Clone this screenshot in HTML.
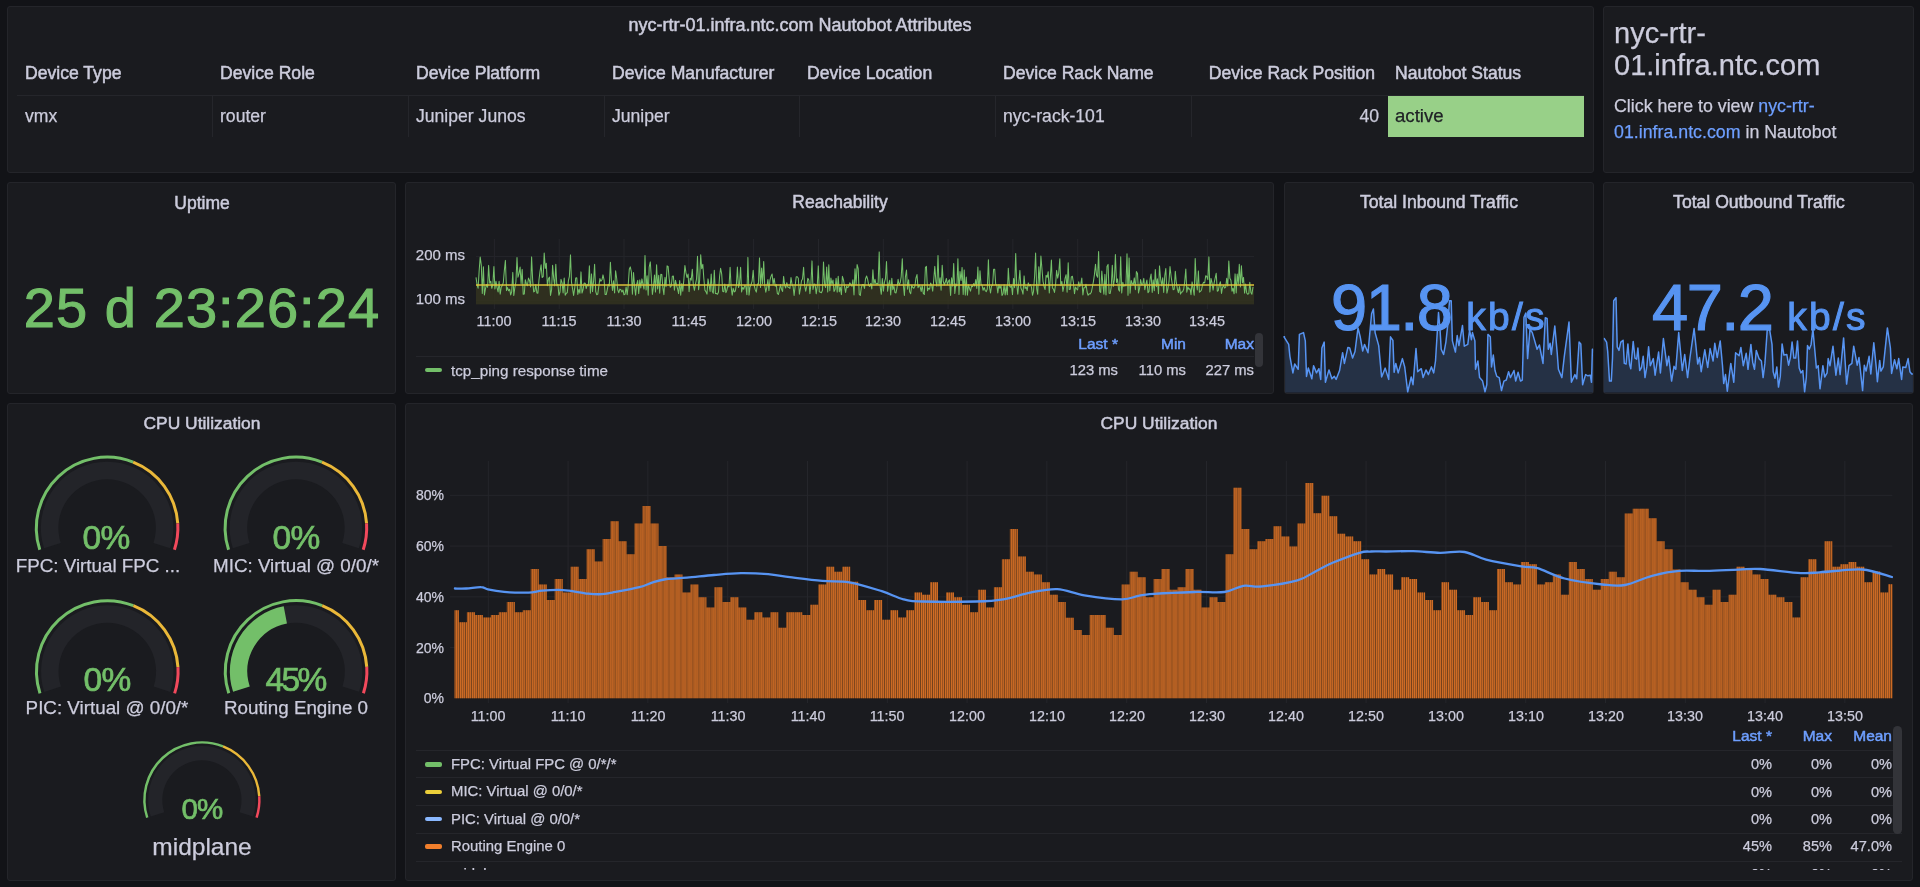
<!DOCTYPE html><html><head><meta charset="utf-8"><style>
*{margin:0;padding:0;box-sizing:border-box}
html,body{width:1920px;height:887px;overflow:hidden;background:#121317;font-family:"Liberation Sans", sans-serif}
.p{position:absolute;background:#1a1b1f;border:1px solid #24252a;border-radius:3px}
.tm,.tr,.tb{position:absolute;white-space:nowrap;will-change:transform}
.tm{-webkit-text-stroke:0.5px currentColor}
.tr{-webkit-text-stroke:0.25px currentColor}
.tb{font-weight:bold}
.ln{position:absolute;background:#25262b}
svg{position:absolute;left:0;top:0}
</style></head><body>
<div class="p" style="left:6.9px;top:5.9px;width:1587.1px;height:167.0px"></div>
<div class="p" style="left:1603.0px;top:5.9px;width:310.9px;height:167.0px"></div>
<div class="p" style="left:6.9px;top:182.2px;width:389.6px;height:211.4px"></div>
<div class="p" style="left:405.1px;top:182.2px;width:869.1px;height:211.4px"></div>
<div class="p" style="left:1284.1px;top:182.2px;width:309.9px;height:211.4px"></div>
<div class="p" style="left:1602.8px;top:182.2px;width:311.1px;height:211.4px"></div>
<div class="p" style="left:6.9px;top:403.4px;width:389.2px;height:477.6px"></div>
<div class="p" style="left:405.3px;top:403.4px;width:1507.4px;height:477.6px"></div>
<div class="tm" style="left:200.4px;width:1200px;text-align:center;top:16.36px;font-size:18px;line-height:18px;color:#ccccdc;">nyc-rtr-01.infra.ntc.com Nautobot Attributes</div>
<div class="tm" style="left:24.7px;top:64.60px;font-size:17.6px;line-height:17.6px;color:#ccccdc;">Device Type</div>
<div class="tm" style="left:220.4px;top:64.60px;font-size:17.6px;line-height:17.6px;color:#ccccdc;">Device Role</div>
<div class="tm" style="left:416.1px;top:64.60px;font-size:17.6px;line-height:17.6px;color:#ccccdc;">Device Platform</div>
<div class="tm" style="left:611.9px;top:64.60px;font-size:17.6px;line-height:17.6px;color:#ccccdc;">Device Manufacturer</div>
<div class="tm" style="left:807.2px;top:64.60px;font-size:17.6px;line-height:17.6px;color:#ccccdc;">Device Location</div>
<div class="tm" style="left:1003.1px;top:64.60px;font-size:17.6px;line-height:17.6px;color:#ccccdc;">Device Rack Name</div>
<div class="tm" style="left:175.0px;width:1200px;text-align:right;top:64.60px;font-size:17.6px;line-height:17.6px;color:#ccccdc;">Device Rack Position</div>
<div class="tm" style="left:1394.7px;top:64.60px;font-size:17.6px;line-height:17.6px;color:#ccccdc;">Nautobot Status</div>
<div class="ln" style="left:17px;top:95px;width:1567px;height:1px"></div>
<div class="ln" style="left:212.0px;top:96px;width:1px;height:41px"></div>
<div class="ln" style="left:407.8px;top:96px;width:1px;height:41px"></div>
<div class="ln" style="left:603.5px;top:96px;width:1px;height:41px"></div>
<div class="ln" style="left:799.1px;top:96px;width:1px;height:41px"></div>
<div class="ln" style="left:994.9px;top:96px;width:1px;height:41px"></div>
<div class="ln" style="left:1190.8px;top:96px;width:1px;height:41px"></div>
<div style="position:absolute;left:1388px;top:95.8px;width:195.8px;height:40.9px;background:#98d088"></div>
<div class="tr" style="left:24.7px;top:108.40px;font-size:17.6px;line-height:17.6px;color:#ccccdc;">vmx</div>
<div class="tr" style="left:220.4px;top:108.40px;font-size:17.6px;line-height:17.6px;color:#ccccdc;">router</div>
<div class="tr" style="left:416.1px;top:108.40px;font-size:17.6px;line-height:17.6px;color:#ccccdc;">Juniper Junos</div>
<div class="tr" style="left:611.9px;top:108.40px;font-size:17.6px;line-height:17.6px;color:#ccccdc;">Juniper</div>
<div class="tr" style="left:1003.1px;top:108.40px;font-size:17.6px;line-height:17.6px;color:#ccccdc;">nyc-rack-101</div>
<div class="tr" style="left:179.0px;width:1200px;text-align:right;top:108.40px;font-size:17.6px;line-height:17.6px;color:#ccccdc;">40</div>
<div class="tr" style="left:1395.2px;top:107.26px;font-size:18.6px;line-height:18.6px;color:#202226;">active</div>
<div class="tr" style="left:1614.0px;top:18.55px;font-size:29px;line-height:29px;color:#ccccdc;">nyc-rtr-</div>
<div class="tr" style="left:1614.0px;top:50.95px;font-size:29px;line-height:29px;color:#ccccdc;">01.infra.ntc.com</div>
<div class="tr" style="left:1614.0px;top:98.03px;font-size:17.8px;line-height:17.8px;color:#ccccdc;">Click here to view <span style="color:#6e9fff">nyc-rtr-</span></div>
<div class="tr" style="left:1614.0px;top:124.03px;font-size:17.8px;line-height:17.8px;color:#ccccdc;"><span style="color:#6e9fff">01.infra.ntc.com</span> in Nautobot</div>
<div class="tm" style="left:-398.3px;width:1200px;text-align:center;top:194.59px;font-size:17.5px;line-height:17.5px;color:#ccccdc;">Uptime</div>
<div class="tr" style="left:-398.3px;width:1200px;text-align:center;top:279.50px;font-size:56px;line-height:56px;color:#73bf69;-webkit-text-stroke:1.1px #73bf69;letter-spacing:1.06px;margin-left:0.5px">25 d 23:26:24</div>
<div class="tm" style="left:239.7px;width:1200px;text-align:center;top:194.19px;font-size:17.5px;line-height:17.5px;color:#ccccdc;">Reachability</div>
<svg width="1920" height="887"><line x1="476" y1="256.6" x2="1254" y2="256.6" stroke="#25262b" stroke-width="1"/><line x1="476" y1="300.6" x2="1254" y2="300.6" stroke="#25262b" stroke-width="1"/><line x1="494.4" y1="239" x2="494.4" y2="309" stroke="#25262b" stroke-width="1"/><line x1="559.2" y1="239" x2="559.2" y2="309" stroke="#25262b" stroke-width="1"/><line x1="624.0" y1="239" x2="624.0" y2="309" stroke="#25262b" stroke-width="1"/><line x1="688.8" y1="239" x2="688.8" y2="309" stroke="#25262b" stroke-width="1"/><line x1="753.6" y1="239" x2="753.6" y2="309" stroke="#25262b" stroke-width="1"/><line x1="818.5" y1="239" x2="818.5" y2="309" stroke="#25262b" stroke-width="1"/><line x1="883.3" y1="239" x2="883.3" y2="309" stroke="#25262b" stroke-width="1"/><line x1="948.1" y1="239" x2="948.1" y2="309" stroke="#25262b" stroke-width="1"/><line x1="1012.9" y1="239" x2="1012.9" y2="309" stroke="#25262b" stroke-width="1"/><line x1="1077.7" y1="239" x2="1077.7" y2="309" stroke="#25262b" stroke-width="1"/><line x1="1142.5" y1="239" x2="1142.5" y2="309" stroke="#25262b" stroke-width="1"/><line x1="1207.3" y1="239" x2="1207.3" y2="309" stroke="#25262b" stroke-width="1"/><rect x="476" y="285" width="778" height="19.4" fill="#35351f" fill-opacity="0.8"/><path d="M476.0,277.4 L477.1,284.8 L478.1,288.2 L479.2,270.1 L480.2,257.1 L481.3,265.1 L482.3,293.5 L483.4,266.7 L484.4,294.9 L485.5,288.6 L486.5,284.5 L487.6,287.3 L488.6,265.4 L489.7,283.3 L490.7,281.2 L491.8,288.3 L492.8,284.7 L493.9,266.5 L494.9,288.9 L496.0,281.3 L497.0,287.4 L498.1,292.0 L499.1,281.2 L500.2,294.1 L501.2,287.3 L502.3,285.4 L503.3,282.8 L504.4,269.9 L505.4,260.4 L506.5,290.6 L507.5,287.6 L508.6,290.8 L509.6,289.2 L510.7,294.9 L511.7,291.6 L512.8,272.4 L513.8,295.4 L514.9,287.3 L515.9,282.0 L517.0,257.5 L518.0,277.1 L519.1,273.2 L520.1,267.0 L521.1,283.8 L522.2,269.4 L523.2,294.2 L524.3,293.9 L525.3,279.7 L526.4,284.0 L527.4,285.7 L528.5,278.1 L529.5,280.4 L530.6,287.0 L531.6,256.9 L532.7,281.1 L533.7,291.9 L534.8,291.1 L535.8,284.6 L536.9,293.0 L537.9,293.2 L539.0,279.6 L540.0,271.6 L541.1,264.8 L542.1,277.5 L543.2,276.5 L544.2,253.1 L545.3,268.4 L546.3,263.2 L547.4,285.7 L548.4,279.1 L549.5,277.1 L550.5,295.4 L551.6,289.6 L552.6,265.2 L553.7,278.4 L554.7,285.9 L555.8,264.3 L556.8,285.7 L557.9,284.3 L558.9,295.3 L560.0,292.0 L561.0,279.3 L562.1,282.9 L563.1,293.0 L564.2,278.0 L565.2,295.3 L566.3,293.3 L567.3,292.5 L568.4,280.7 L569.4,276.3 L570.5,254.9 L571.5,282.2 L572.6,289.1 L573.6,295.4 L574.7,288.2 L575.7,278.0 L576.8,277.8 L577.8,294.4 L578.9,289.5 L579.9,293.2 L581.0,271.9 L582.0,293.0 L583.1,289.5 L584.1,283.1 L585.2,283.2 L586.2,288.6 L587.3,284.5 L588.3,286.0 L589.4,265.8 L590.4,293.3 L591.5,273.9 L592.5,291.6 L593.6,280.9 L594.6,264.2 L595.7,291.5 L596.7,294.7 L597.8,294.0 L598.8,286.4 L599.9,278.6 L600.9,281.3 L602.0,279.8 L603.0,274.9 L604.1,280.1 L605.1,294.4 L606.2,294.6 L607.2,290.1 L608.3,284.2 L609.3,286.1 L610.4,262.2 L611.4,280.3 L612.5,290.4 L613.5,280.7 L614.6,293.0 L615.6,270.7 L616.7,278.5 L617.7,289.8 L618.8,292.7 L619.8,289.1 L620.9,289.8 L621.9,292.0 L623.0,290.1 L624.0,294.8 L625.1,294.1 L626.1,287.0 L627.2,294.8 L628.2,285.6 L629.3,269.3 L630.3,266.9 L631.4,272.0 L632.4,294.3 L633.5,272.6 L634.5,285.6 L635.6,295.1 L636.6,284.6 L637.7,280.4 L638.7,293.6 L639.8,279.9 L640.8,287.9 L641.9,278.9 L642.9,284.2 L644.0,289.1 L645.0,255.6 L646.1,289.9 L647.1,275.8 L648.2,295.2 L649.2,267.2 L650.3,261.9 L651.3,277.2 L652.4,294.5 L653.4,287.0 L654.5,275.0 L655.5,292.1 L656.6,264.7 L657.6,288.9 L658.7,275.3 L659.7,293.2 L660.8,274.3 L661.8,274.4 L662.9,287.9 L663.9,294.7 L665.0,277.2 L666.0,286.7 L667.1,265.9 L668.1,266.4 L669.2,278.7 L670.2,287.3 L671.3,286.0 L672.3,276.2 L673.4,276.1 L674.4,290.3 L675.5,280.3 L676.5,285.2 L677.6,289.0 L678.6,293.6 L679.7,280.6 L680.7,295.3 L681.8,283.5 L682.8,291.3 L683.9,279.1 L684.9,265.6 L686.0,272.9 L687.0,277.5 L688.1,274.1 L689.1,291.7 L690.2,278.2 L691.2,280.1 L692.3,269.3 L693.3,284.7 L694.4,290.3 L695.4,284.7 L696.5,279.2 L697.5,256.3 L698.6,289.8 L699.6,280.5 L700.7,254.7 L701.7,268.8 L702.8,264.3 L703.8,278.1 L704.9,290.1 L705.9,291.6 L707.0,294.1 L708.0,278.9 L709.1,285.7 L710.1,291.4 L711.2,274.0 L712.2,291.2 L713.3,293.3 L714.3,270.3 L715.4,293.6 L716.4,293.5 L717.5,294.3 L718.5,292.0 L719.6,276.3 L720.6,268.3 L721.7,274.0 L722.7,291.2 L723.8,291.8 L724.8,284.0 L725.9,292.6 L726.9,290.2 L728.0,284.8 L729.0,286.9 L730.1,267.2 L731.1,286.4 L732.2,295.2 L733.2,288.4 L734.3,291.9 L735.3,291.1 L736.4,284.9 L737.4,267.0 L738.5,287.5 L739.5,284.1 L740.6,267.2 L741.6,292.0 L742.7,287.3 L743.7,289.3 L744.8,285.4 L745.8,286.3 L746.9,294.8 L747.9,257.4 L749.0,295.1 L750.0,287.1 L751.1,284.5 L752.1,281.2 L753.2,270.3 L754.2,285.5 L755.3,289.9 L756.3,292.1 L757.4,284.1 L758.4,284.3 L759.5,257.9 L760.5,287.5 L761.6,268.1 L762.6,283.6 L763.7,261.5 L764.7,285.4 L765.8,292.2 L766.8,287.3 L767.9,279.5 L768.9,290.8 L770.0,279.9 L771.0,276.4 L772.1,274.0 L773.1,284.4 L774.2,278.4 L775.2,286.2 L776.3,284.6 L777.3,293.3 L778.4,294.5 L779.4,290.3 L780.5,284.6 L781.5,289.2 L782.6,291.4 L783.6,276.4 L784.7,285.5 L785.7,288.0 L786.8,282.7 L787.8,287.0 L788.9,287.5 L789.9,288.5 L791.0,277.5 L792.0,284.2 L793.1,286.5 L794.1,295.5 L795.2,285.6 L796.2,276.8 L797.3,276.8 L798.3,278.3 L799.4,294.2 L800.4,288.7 L801.5,280.7 L802.5,279.0 L803.6,267.3 L804.6,285.4 L805.7,291.2 L806.7,286.5 L807.8,278.2 L808.8,280.0 L809.9,293.8 L810.9,284.3 L812.0,260.9 L813.0,289.4 L814.1,284.0 L815.1,284.3 L816.2,293.8 L817.2,286.9 L818.3,265.9 L819.3,291.8 L820.4,292.3 L821.4,292.8 L822.5,290.3 L823.5,262.0 L824.6,284.3 L825.6,287.5 L826.7,267.0 L827.7,292.0 L828.8,264.8 L829.8,290.7 L830.9,278.0 L831.9,284.1 L833.0,280.1 L834.0,291.4 L835.1,289.5 L836.1,278.2 L837.2,292.1 L838.2,276.2 L839.3,291.8 L840.3,287.0 L841.4,294.6 L842.4,276.3 L843.5,279.8 L844.5,286.3 L845.6,292.5 L846.6,286.4 L847.7,287.6 L848.7,286.7 L849.8,282.8 L850.8,284.6 L851.9,286.2 L852.9,279.8 L854.0,294.9 L855.0,268.7 L856.1,284.8 L857.1,264.6 L858.2,268.7 L859.2,294.2 L860.3,295.5 L861.3,287.8 L862.4,284.4 L863.4,284.4 L864.5,288.4 L865.5,279.0 L866.6,276.0 L867.6,279.2 L868.7,285.4 L869.7,286.4 L870.8,283.4 L871.8,289.0 L872.9,269.7 L873.9,284.3 L875.0,279.3 L876.0,284.3 L877.1,283.3 L878.1,284.5 L879.2,251.9 L880.2,287.0 L881.3,294.3 L882.3,278.5 L883.4,291.1 L884.4,282.4 L885.5,278.5 L886.5,261.6 L887.6,291.3 L888.6,284.3 L889.7,280.3 L890.7,295.0 L891.8,278.3 L892.8,289.7 L893.9,286.1 L894.9,292.5 L896.0,292.9 L897.0,287.8 L898.1,279.3 L899.1,284.9 L900.2,282.8 L901.2,276.6 L902.3,258.7 L903.3,284.8 L904.4,295.4 L905.4,276.8 L906.5,270.0 L907.5,289.1 L908.6,279.8 L909.6,291.8 L910.7,293.7 L911.7,285.4 L912.8,287.4 L913.8,288.3 L914.9,286.3 L915.9,278.2 L917.0,274.6 L918.0,287.8 L919.1,284.9 L920.1,286.7 L921.2,291.5 L922.2,285.2 L923.3,293.4 L924.3,294.5 L925.4,267.5 L926.4,266.3 L927.5,290.7 L928.5,288.3 L929.6,289.2 L930.6,283.0 L931.7,285.2 L932.7,291.1 L933.8,279.3 L934.8,266.4 L935.9,281.4 L936.9,286.3 L938.0,255.6 L939.0,286.1 L940.1,277.8 L941.1,290.3 L942.2,265.2 L943.2,281.0 L944.3,285.0 L945.3,282.3 L946.4,278.5 L947.4,284.6 L948.5,281.1 L949.5,279.7 L950.6,295.5 L951.6,277.8 L952.7,286.3 L953.7,263.6 L954.8,293.4 L955.8,283.9 L956.9,285.9 L957.9,258.7 L959.0,294.5 L960.0,271.5 L961.1,280.5 L962.1,267.4 L963.2,294.6 L964.2,269.9 L965.3,295.1 L966.3,277.1 L967.4,295.2 L968.4,284.6 L969.5,288.5 L970.5,291.1 L971.6,285.8 L972.6,286.6 L973.7,283.6 L974.7,286.1 L975.8,279.6 L976.8,288.4 L977.9,267.0 L978.9,294.3 L980.0,270.7 L981.0,284.4 L982.1,285.4 L983.1,290.3 L984.2,287.5 L985.2,290.7 L986.3,291.6 L987.3,289.0 L988.4,259.7 L989.4,286.7 L990.5,293.0 L991.5,286.1 L992.6,285.2 L993.6,269.2 L994.7,269.3 L995.7,284.5 L996.8,284.9 L997.8,292.9 L998.9,284.6 L999.9,288.3 L1001.0,285.6 L1002.0,295.5 L1003.1,293.4 L1004.1,284.8 L1005.2,295.0 L1006.2,285.9 L1007.3,294.7 L1008.3,268.2 L1009.4,285.8 L1010.4,287.2 L1011.5,285.7 L1012.5,294.6 L1013.6,278.4 L1014.6,287.7 L1015.7,253.5 L1016.7,284.4 L1017.8,294.3 L1018.8,283.1 L1019.9,270.4 L1020.9,288.1 L1022.0,290.4 L1023.0,294.1 L1024.1,275.9 L1025.1,288.5 L1026.2,287.0 L1027.2,290.6 L1028.3,282.9 L1029.3,286.0 L1030.4,284.6 L1031.4,286.9 L1032.5,295.3 L1033.5,291.6 L1034.6,276.0 L1035.6,253.1 L1036.7,289.0 L1037.7,294.3 L1038.8,266.7 L1039.8,284.3 L1040.9,256.0 L1041.9,268.3 L1043.0,281.3 L1044.0,286.3 L1045.1,289.5 L1046.1,275.2 L1047.2,277.3 L1048.2,271.7 L1049.3,293.0 L1050.3,278.4 L1051.4,260.0 L1052.4,288.0 L1053.5,289.1 L1054.5,292.4 L1055.6,284.1 L1056.6,270.4 L1057.7,278.1 L1058.7,273.3 L1059.8,258.7 L1060.8,285.6 L1061.9,281.5 L1062.9,291.4 L1064.0,286.0 L1065.0,278.7 L1066.1,274.7 L1067.1,292.2 L1068.2,262.8 L1069.2,289.4 L1070.3,289.2 L1071.3,276.9 L1072.4,276.3 L1073.4,282.7 L1074.5,293.7 L1075.5,287.1 L1076.6,289.0 L1077.6,290.0 L1078.7,281.8 L1079.7,286.5 L1080.8,284.2 L1081.8,278.1 L1082.9,294.9 L1083.9,287.8 L1085.0,287.8 L1086.0,284.2 L1087.1,292.0 L1088.1,295.3 L1089.2,293.7 L1090.2,293.9 L1091.3,292.3 L1092.3,287.5 L1093.4,281.6 L1094.4,274.9 L1095.5,264.3 L1096.5,275.1 L1097.6,277.3 L1098.6,251.6 L1099.7,291.3 L1100.7,292.5 L1101.8,271.1 L1102.8,283.4 L1103.9,294.2 L1104.9,274.4 L1106.0,294.9 L1107.0,266.5 L1108.1,264.4 L1109.1,293.3 L1110.2,293.5 L1111.2,287.3 L1112.3,265.2 L1113.3,286.4 L1114.4,279.8 L1115.4,254.6 L1116.5,282.4 L1117.5,278.9 L1118.6,289.8 L1119.6,291.1 L1120.7,256.8 L1121.7,292.9 L1122.8,282.3 L1123.8,286.5 L1124.9,285.0 L1125.9,286.0 L1127.0,253.8 L1128.0,295.2 L1129.1,257.9 L1130.1,293.2 L1131.2,280.5 L1132.2,283.5 L1133.3,284.5 L1134.3,277.9 L1135.4,289.7 L1136.4,271.6 L1137.5,273.5 L1138.5,293.0 L1139.6,288.1 L1140.6,279.6 L1141.7,285.0 L1142.7,284.3 L1143.8,278.4 L1144.8,289.8 L1145.9,284.0 L1146.9,280.1 L1148.0,292.7 L1149.0,291.4 L1150.1,278.9 L1151.1,274.1 L1152.2,292.5 L1153.2,279.9 L1154.3,290.7 L1155.3,269.5 L1156.4,286.7 L1157.4,278.7 L1158.5,293.7 L1159.5,265.9 L1160.6,278.9 L1161.6,285.9 L1162.7,277.7 L1163.7,292.4 L1164.8,275.5 L1165.8,268.6 L1166.9,293.1 L1167.9,289.0 L1169.0,281.7 L1170.0,266.5 L1171.1,276.3 L1172.1,283.1 L1173.2,289.8 L1174.2,289.3 L1175.3,271.2 L1176.3,282.7 L1177.4,288.9 L1178.4,292.6 L1179.5,286.6 L1180.5,294.1 L1181.6,292.1 L1182.6,291.8 L1183.7,289.2 L1184.7,281.7 L1185.8,269.0 L1186.8,292.2 L1187.9,286.9 L1188.9,289.2 L1190.0,288.7 L1191.0,294.7 L1192.1,281.9 L1193.1,288.5 L1194.2,295.2 L1195.2,258.6 L1196.3,283.0 L1197.3,290.0 L1198.4,270.9 L1199.4,292.2 L1200.5,291.4 L1201.5,290.0 L1202.6,284.5 L1203.6,282.2 L1204.7,282.9 L1205.7,275.8 L1206.8,276.5 L1207.8,279.6 L1208.9,256.9 L1209.9,292.0 L1211.0,278.4 L1212.0,282.7 L1213.1,290.1 L1214.1,283.2 L1215.2,277.9 L1216.2,273.3 L1217.3,291.3 L1218.3,290.5 L1219.4,284.7 L1220.4,281.7 L1221.5,293.4 L1222.5,287.4 L1223.6,285.4 L1224.6,288.1 L1225.7,287.1 L1226.7,278.3 L1227.8,286.1 L1228.8,261.1 L1229.9,278.2 L1230.9,280.3 L1232.0,291.3 L1233.0,288.2 L1234.1,293.8 L1235.1,273.9 L1236.2,293.0 L1237.2,274.0 L1238.3,284.2 L1239.3,264.3 L1240.4,286.9 L1241.4,265.7 L1242.5,283.0 L1243.5,277.4 L1244.6,293.1 L1245.6,284.0 L1246.7,293.0 L1247.7,294.3 L1248.8,293.6 L1249.8,282.2 L1250.9,292.5 L1251.9,294.2 L1253.0,287.0" fill="none" stroke="#73bf69" stroke-width="1.05" stroke-linejoin="round"/><line x1="476" y1="285" x2="1254" y2="285" stroke="#dcc23a" stroke-width="1.4"/></svg>
<div class="tr" style="left:-734.8px;width:1200px;text-align:right;top:247.00px;font-size:15px;line-height:15px;color:#ccccdc;">200 ms</div>
<div class="tr" style="left:-734.8px;width:1200px;text-align:right;top:291.20px;font-size:15px;line-height:15px;color:#ccccdc;">100 ms</div>
<div class="tr" style="left:-105.6px;width:1200px;text-align:center;top:314.31px;font-size:14.4px;line-height:14.4px;color:#ccccdc;">11:00</div>
<div class="tr" style="left:-40.8px;width:1200px;text-align:center;top:314.31px;font-size:14.4px;line-height:14.4px;color:#ccccdc;">11:15</div>
<div class="tr" style="left:24.0px;width:1200px;text-align:center;top:314.31px;font-size:14.4px;line-height:14.4px;color:#ccccdc;">11:30</div>
<div class="tr" style="left:88.8px;width:1200px;text-align:center;top:314.31px;font-size:14.4px;line-height:14.4px;color:#ccccdc;">11:45</div>
<div class="tr" style="left:153.6px;width:1200px;text-align:center;top:314.31px;font-size:14.4px;line-height:14.4px;color:#ccccdc;">12:00</div>
<div class="tr" style="left:218.5px;width:1200px;text-align:center;top:314.31px;font-size:14.4px;line-height:14.4px;color:#ccccdc;">12:15</div>
<div class="tr" style="left:283.3px;width:1200px;text-align:center;top:314.31px;font-size:14.4px;line-height:14.4px;color:#ccccdc;">12:30</div>
<div class="tr" style="left:348.1px;width:1200px;text-align:center;top:314.31px;font-size:14.4px;line-height:14.4px;color:#ccccdc;">12:45</div>
<div class="tr" style="left:412.9px;width:1200px;text-align:center;top:314.31px;font-size:14.4px;line-height:14.4px;color:#ccccdc;">13:00</div>
<div class="tr" style="left:477.7px;width:1200px;text-align:center;top:314.31px;font-size:14.4px;line-height:14.4px;color:#ccccdc;">13:15</div>
<div class="tr" style="left:542.5px;width:1200px;text-align:center;top:314.31px;font-size:14.4px;line-height:14.4px;color:#ccccdc;">13:30</div>
<div class="tr" style="left:607.3px;width:1200px;text-align:center;top:314.31px;font-size:14.4px;line-height:14.4px;color:#ccccdc;">13:45</div>
<div class="ln" style="left:416px;top:356px;width:838px;height:1px"></div>
<div class="tm" style="left:-81.7px;width:1200px;text-align:right;top:335.68px;font-size:15.5px;line-height:15.5px;color:#6e9fff;">Last *</div>
<div class="tm" style="left:-14.5px;width:1200px;text-align:right;top:335.68px;font-size:15.5px;line-height:15.5px;color:#6e9fff;">Min</div>
<div class="tm" style="left:53.5px;width:1200px;text-align:right;top:335.68px;font-size:15.5px;line-height:15.5px;color:#6e9fff;">Max</div>
<div style="position:absolute;left:425px;top:368.3px;width:16.5px;height:4px;border-radius:2px;background:#73bf69"></div>
<div class="tr" style="left:450.7px;top:363.43px;font-size:15.2px;line-height:15.2px;color:#ccccdc;">tcp_ping response time</div>
<div class="tr" style="left:-81.7px;width:1200px;text-align:right;top:363.37px;font-size:14.8px;line-height:14.8px;color:#ccccdc;">123 ms</div>
<div class="tr" style="left:-14.5px;width:1200px;text-align:right;top:363.37px;font-size:14.8px;line-height:14.8px;color:#ccccdc;">110 ms</div>
<div class="tr" style="left:53.5px;width:1200px;text-align:right;top:363.37px;font-size:14.8px;line-height:14.8px;color:#ccccdc;">227 ms</div>
<div style="position:absolute;left:1255px;top:333px;width:8px;height:33.5px;border-radius:4px;background:#333439"></div>
<svg width="1920" height="887"><path d="M1285.1,336.8 L1284.0,336.8 L1288.7,344.4 L1289.9,356.3 L1292.9,372.9 L1294.7,364.0 L1298.2,369.3 L1299.4,334.4 L1303.5,332.6 L1305.3,340.9 L1306.5,376.4 L1308.3,368.1 L1311.8,378.8 L1313.6,365.7 L1316.5,372.9 L1318.9,368.7 L1320.7,379.4 L1321.9,348.0 L1324.2,342.1 L1325.4,382.3 L1329.0,369.9 L1331.9,378.8 L1334.3,376.4 L1336.1,379.4 L1339.6,370.5 L1342.6,352.7 L1344.4,363.4 L1347.9,347.4 L1349.7,348.0 L1352.6,358.1 L1355.0,351.5 L1358.0,327.9 L1360.3,337.3 L1362.7,351.0 L1364.5,344.4 L1368.0,352.7 L1371.6,313.7 L1373.4,308.9 L1375.1,332.6 L1378.7,345.6 L1381.6,377.0 L1385.2,368.1 L1388.7,379.4 L1390.5,336.8 L1392.9,340.3 L1394.1,372.3 L1395.8,363.4 L1398.2,372.9 L1402.4,358.6 L1404.7,366.9 L1407.7,391.8 L1411.2,377.0 L1413.0,384.7 L1416.0,348.6 L1417.7,371.7 L1421.3,368.7 L1423.1,377.6 L1426.0,369.9 L1428.4,374.6 L1431.4,366.9 L1433.7,372.9 L1435.5,361.0 L1438.5,312.5 L1440.0,329.1 L1441.2,349.2 L1443.6,354.5 L1445.9,342.1 L1447.7,325.5 L1449.5,300.7 L1451.2,300.7 L1452.4,340.9 L1455.4,352.1 L1457.2,335.6 L1458.9,345.6 L1462.5,325.5 L1464.3,346.2 L1467.8,344.4 L1469.6,330.2 L1471.4,339.7 L1472.5,332.6 L1474.9,340.9 L1475.5,369.3 L1477.9,361.0 L1479.6,377.6 L1482.6,381.1 L1485.0,391.8 L1486.8,384.7 L1487.9,334.4 L1490.3,336.8 L1491.5,366.9 L1493.3,355.1 L1495.0,370.5 L1496.8,376.4 L1499.2,377.6 L1501.5,390.6 L1503.9,381.1 L1506.3,380.0 L1508.6,371.7 L1510.4,377.6 L1514.0,370.5 L1515.7,381.1 L1518.1,372.3 L1520.5,381.1 L1522.3,380.0 L1524.0,317.2 L1525.8,313.1 L1527.6,358.6 L1530.0,329.1 L1532.3,332.6 L1534.7,340.9 L1537.1,349.2 L1539.4,345.0 L1543.0,363.4 L1545.3,317.8 L1547.1,318.4 L1548.3,349.2 L1550.1,343.3 L1551.3,354.5 L1554.8,326.1 L1557.2,352.7 L1558.4,369.3 L1561.9,377.6 L1564.3,356.3 L1569.0,322.0 L1571.4,382.3 L1574.9,374.6 L1576.7,378.8 L1579.1,342.1 L1580.8,343.9 L1582.6,384.7 L1585.6,374.6 L1587.9,375.8 L1590.3,375.2 L1591.5,382.3 L1592.4,349.2 L1593.0,349.2 L1593.0,392.6 L1285.1,392.6 Z" fill="#5794f2" fill-opacity="0.18"/><path d="M1285.1,336.8 L1284.0,336.8 L1288.7,344.4 L1289.9,356.3 L1292.9,372.9 L1294.7,364.0 L1298.2,369.3 L1299.4,334.4 L1303.5,332.6 L1305.3,340.9 L1306.5,376.4 L1308.3,368.1 L1311.8,378.8 L1313.6,365.7 L1316.5,372.9 L1318.9,368.7 L1320.7,379.4 L1321.9,348.0 L1324.2,342.1 L1325.4,382.3 L1329.0,369.9 L1331.9,378.8 L1334.3,376.4 L1336.1,379.4 L1339.6,370.5 L1342.6,352.7 L1344.4,363.4 L1347.9,347.4 L1349.7,348.0 L1352.6,358.1 L1355.0,351.5 L1358.0,327.9 L1360.3,337.3 L1362.7,351.0 L1364.5,344.4 L1368.0,352.7 L1371.6,313.7 L1373.4,308.9 L1375.1,332.6 L1378.7,345.6 L1381.6,377.0 L1385.2,368.1 L1388.7,379.4 L1390.5,336.8 L1392.9,340.3 L1394.1,372.3 L1395.8,363.4 L1398.2,372.9 L1402.4,358.6 L1404.7,366.9 L1407.7,391.8 L1411.2,377.0 L1413.0,384.7 L1416.0,348.6 L1417.7,371.7 L1421.3,368.7 L1423.1,377.6 L1426.0,369.9 L1428.4,374.6 L1431.4,366.9 L1433.7,372.9 L1435.5,361.0 L1438.5,312.5 L1440.0,329.1 L1441.2,349.2 L1443.6,354.5 L1445.9,342.1 L1447.7,325.5 L1449.5,300.7 L1451.2,300.7 L1452.4,340.9 L1455.4,352.1 L1457.2,335.6 L1458.9,345.6 L1462.5,325.5 L1464.3,346.2 L1467.8,344.4 L1469.6,330.2 L1471.4,339.7 L1472.5,332.6 L1474.9,340.9 L1475.5,369.3 L1477.9,361.0 L1479.6,377.6 L1482.6,381.1 L1485.0,391.8 L1486.8,384.7 L1487.9,334.4 L1490.3,336.8 L1491.5,366.9 L1493.3,355.1 L1495.0,370.5 L1496.8,376.4 L1499.2,377.6 L1501.5,390.6 L1503.9,381.1 L1506.3,380.0 L1508.6,371.7 L1510.4,377.6 L1514.0,370.5 L1515.7,381.1 L1518.1,372.3 L1520.5,381.1 L1522.3,380.0 L1524.0,317.2 L1525.8,313.1 L1527.6,358.6 L1530.0,329.1 L1532.3,332.6 L1534.7,340.9 L1537.1,349.2 L1539.4,345.0 L1543.0,363.4 L1545.3,317.8 L1547.1,318.4 L1548.3,349.2 L1550.1,343.3 L1551.3,354.5 L1554.8,326.1 L1557.2,352.7 L1558.4,369.3 L1561.9,377.6 L1564.3,356.3 L1569.0,322.0 L1571.4,382.3 L1574.9,374.6 L1576.7,378.8 L1579.1,342.1 L1580.8,343.9 L1582.6,384.7 L1585.6,374.6 L1587.9,375.8 L1590.3,375.2 L1591.5,382.3 L1592.4,349.2 L1593.0,349.2" fill="none" stroke="#5794f2" stroke-width="1.5" stroke-linejoin="round"/><path d="M1603.8,338.5 L1604.2,338.5 L1606.6,342.1 L1607.7,351.5 L1609.5,381.1 L1611.3,381.1 L1612.5,358.1 L1613.7,300.7 L1616.0,297.7 L1617.2,346.8 L1619.0,350.4 L1620.8,342.1 L1623.1,340.3 L1624.3,363.4 L1626.1,364.0 L1627.9,343.9 L1629.6,364.6 L1630.8,368.7 L1633.2,341.5 L1635.0,358.1 L1636.7,359.2 L1637.9,348.0 L1639.7,370.5 L1641.5,367.5 L1643.2,356.3 L1645.0,377.6 L1646.8,366.9 L1648.6,346.8 L1650.3,365.7 L1653.3,358.6 L1655.1,375.2 L1658.6,352.1 L1660.4,372.9 L1663.4,338.5 L1666.9,365.7 L1668.7,356.3 L1671.6,381.1 L1674.0,366.3 L1675.8,369.3 L1678.7,332.6 L1682.3,370.5 L1684.7,354.5 L1687.6,377.6 L1690.0,357.5 L1694.1,328.5 L1695.9,345.6 L1697.7,364.0 L1699.5,357.5 L1701.2,371.7 L1704.8,349.8 L1707.7,367.5 L1710.1,348.6 L1713.1,361.0 L1714.8,343.3 L1717.2,357.5 L1720.2,340.9 L1722.5,365.7 L1723.7,383.5 L1725.5,374.6 L1727.3,391.2 L1730.8,363.4 L1733.8,382.3 L1735.6,352.7 L1739.1,355.7 L1740.9,347.4 L1743.3,365.7 L1746.2,353.3 L1748.0,369.3 L1750.9,344.4 L1752.7,362.2 L1754.5,369.3 L1756.3,350.4 L1759.0,358.6 L1761.4,361.0 L1763.1,377.6 L1764.9,363.4 L1767.3,329.1 L1769.7,330.2 L1772.0,344.4 L1773.2,371.7 L1775.0,378.2 L1776.8,366.9 L1778.5,387.1 L1780.3,376.4 L1782.1,343.9 L1783.9,355.1 L1786.8,354.5 L1788.6,365.2 L1790.4,357.5 L1792.1,342.1 L1793.9,358.1 L1795.7,358.1 L1797.5,340.9 L1799.2,368.1 L1801.0,372.9 L1802.8,370.5 L1804.6,391.8 L1806.3,377.6 L1807.5,345.6 L1809.3,349.2 L1811.1,344.4 L1812.9,329.1 L1814.6,348.0 L1816.4,368.1 L1818.2,365.7 L1820.0,388.8 L1822.9,365.7 L1824.7,377.0 L1827.1,372.9 L1828.2,358.6 L1830.0,365.7 L1833.0,346.2 L1835.9,375.2 L1838.3,358.1 L1840.1,374.6 L1843.6,337.9 L1846.6,384.1 L1849.0,365.7 L1851.9,363.4 L1853.7,346.2 L1857.2,365.2 L1859.0,357.5 L1862.6,390.6 L1864.3,365.2 L1866.1,371.1 L1869.1,356.3 L1870.8,374.0 L1873.8,342.7 L1876.2,366.9 L1877.4,381.7 L1879.7,360.4 L1880.9,371.1 L1883.3,366.9 L1887.4,327.9 L1890.4,348.0 L1891.6,373.4 L1894.5,359.8 L1896.9,368.7 L1898.7,358.6 L1901.6,379.4 L1902.8,366.9 L1905.8,367.5 L1908.1,358.6 L1909.9,371.7 L1911.7,374.0 L1912.9,374.0 L1912.9,392.6 L1603.8,392.6 Z" fill="#5794f2" fill-opacity="0.18"/><path d="M1603.8,338.5 L1604.2,338.5 L1606.6,342.1 L1607.7,351.5 L1609.5,381.1 L1611.3,381.1 L1612.5,358.1 L1613.7,300.7 L1616.0,297.7 L1617.2,346.8 L1619.0,350.4 L1620.8,342.1 L1623.1,340.3 L1624.3,363.4 L1626.1,364.0 L1627.9,343.9 L1629.6,364.6 L1630.8,368.7 L1633.2,341.5 L1635.0,358.1 L1636.7,359.2 L1637.9,348.0 L1639.7,370.5 L1641.5,367.5 L1643.2,356.3 L1645.0,377.6 L1646.8,366.9 L1648.6,346.8 L1650.3,365.7 L1653.3,358.6 L1655.1,375.2 L1658.6,352.1 L1660.4,372.9 L1663.4,338.5 L1666.9,365.7 L1668.7,356.3 L1671.6,381.1 L1674.0,366.3 L1675.8,369.3 L1678.7,332.6 L1682.3,370.5 L1684.7,354.5 L1687.6,377.6 L1690.0,357.5 L1694.1,328.5 L1695.9,345.6 L1697.7,364.0 L1699.5,357.5 L1701.2,371.7 L1704.8,349.8 L1707.7,367.5 L1710.1,348.6 L1713.1,361.0 L1714.8,343.3 L1717.2,357.5 L1720.2,340.9 L1722.5,365.7 L1723.7,383.5 L1725.5,374.6 L1727.3,391.2 L1730.8,363.4 L1733.8,382.3 L1735.6,352.7 L1739.1,355.7 L1740.9,347.4 L1743.3,365.7 L1746.2,353.3 L1748.0,369.3 L1750.9,344.4 L1752.7,362.2 L1754.5,369.3 L1756.3,350.4 L1759.0,358.6 L1761.4,361.0 L1763.1,377.6 L1764.9,363.4 L1767.3,329.1 L1769.7,330.2 L1772.0,344.4 L1773.2,371.7 L1775.0,378.2 L1776.8,366.9 L1778.5,387.1 L1780.3,376.4 L1782.1,343.9 L1783.9,355.1 L1786.8,354.5 L1788.6,365.2 L1790.4,357.5 L1792.1,342.1 L1793.9,358.1 L1795.7,358.1 L1797.5,340.9 L1799.2,368.1 L1801.0,372.9 L1802.8,370.5 L1804.6,391.8 L1806.3,377.6 L1807.5,345.6 L1809.3,349.2 L1811.1,344.4 L1812.9,329.1 L1814.6,348.0 L1816.4,368.1 L1818.2,365.7 L1820.0,388.8 L1822.9,365.7 L1824.7,377.0 L1827.1,372.9 L1828.2,358.6 L1830.0,365.7 L1833.0,346.2 L1835.9,375.2 L1838.3,358.1 L1840.1,374.6 L1843.6,337.9 L1846.6,384.1 L1849.0,365.7 L1851.9,363.4 L1853.7,346.2 L1857.2,365.2 L1859.0,357.5 L1862.6,390.6 L1864.3,365.2 L1866.1,371.1 L1869.1,356.3 L1870.8,374.0 L1873.8,342.7 L1876.2,366.9 L1877.4,381.7 L1879.7,360.4 L1880.9,371.1 L1883.3,366.9 L1887.4,327.9 L1890.4,348.0 L1891.6,373.4 L1894.5,359.8 L1896.9,368.7 L1898.7,358.6 L1901.6,379.4 L1902.8,366.9 L1905.8,367.5 L1908.1,358.6 L1909.9,371.7 L1911.7,374.0 L1912.9,374.0" fill="none" stroke="#5794f2" stroke-width="1.5" stroke-linejoin="round"/></svg>
<div class="tm" style="left:839.0px;width:1200px;text-align:center;top:194.10px;font-size:17.6px;line-height:17.6px;color:#ccccdc;">Total Inbound Traffic</div>
<div class="tm" style="left:1158.7px;width:1200px;text-align:center;top:194.10px;font-size:17.6px;line-height:17.6px;color:#ccccdc;">Total Outbound Traffic</div>
<div class="tr" style="left:1331.4px;top:275.18px;font-size:65px;line-height:65px;color:#5794f2;-webkit-text-stroke:1.2px #5794f2;letter-spacing:-1.5px">91.8<span style="font-size:39px;letter-spacing:2.2px;-webkit-text-stroke:1px #5794f2"><span style="letter-spacing:4px"> </span>kb/s</span></div>
<div class="tr" style="left:1652.0px;top:275.18px;font-size:65px;line-height:65px;color:#5794f2;-webkit-text-stroke:1.2px #5794f2;letter-spacing:-1.5px">47.2<span style="font-size:39px;letter-spacing:2.2px;-webkit-text-stroke:1px #5794f2"><span style="letter-spacing:4px"> </span>kb/s</span></div>
<div class="tm" style="left:-398.5px;width:1200px;text-align:center;top:414.97px;font-size:17.4px;line-height:17.4px;color:#ccccdc;">CPU Utilization</div>
<svg width="1920" height="887"><path d="M39.77,549.78 A70.80,70.80 0 0 1 133.16,462.07" fill="none" stroke="#73bf69" stroke-width="3.00" stroke-linecap="butt"/><path d="M133.16,462.07 A70.80,70.80 0 0 1 177.76,523.45" fill="none" stroke="#eab839" stroke-width="3.00" stroke-linecap="butt"/><path d="M177.76,523.45 A70.80,70.80 0 0 1 174.43,549.78" fill="none" stroke="#f2495c" stroke-width="3.00" stroke-linecap="butt"/><path d="M52.41,545.67 A57.50,57.50 0 1 1 161.79,545.67" fill="none" stroke="#232429" stroke-width="17.50" stroke-linecap="butt"/><path d="M228.57,549.78 A70.80,70.80 0 0 1 321.96,462.07" fill="none" stroke="#73bf69" stroke-width="3.00" stroke-linecap="butt"/><path d="M321.96,462.07 A70.80,70.80 0 0 1 366.56,523.45" fill="none" stroke="#eab839" stroke-width="3.00" stroke-linecap="butt"/><path d="M366.56,523.45 A70.80,70.80 0 0 1 363.23,549.78" fill="none" stroke="#f2495c" stroke-width="3.00" stroke-linecap="butt"/><path d="M241.21,545.67 A57.50,57.50 0 1 1 350.59,545.67" fill="none" stroke="#232429" stroke-width="17.50" stroke-linecap="butt"/><path d="M39.97,693.38 A70.80,70.80 0 0 1 133.36,605.67" fill="none" stroke="#73bf69" stroke-width="3.00" stroke-linecap="butt"/><path d="M133.36,605.67 A70.80,70.80 0 0 1 177.96,667.05" fill="none" stroke="#eab839" stroke-width="3.00" stroke-linecap="butt"/><path d="M177.96,667.05 A70.80,70.80 0 0 1 174.63,693.38" fill="none" stroke="#f2495c" stroke-width="3.00" stroke-linecap="butt"/><path d="M52.61,689.27 A57.50,57.50 0 1 1 161.99,689.27" fill="none" stroke="#232429" stroke-width="17.50" stroke-linecap="butt"/><path d="M228.77,693.28 A70.80,70.80 0 0 1 322.16,605.57" fill="none" stroke="#73bf69" stroke-width="3.00" stroke-linecap="butt"/><path d="M322.16,605.57 A70.80,70.80 0 0 1 366.76,666.95" fill="none" stroke="#eab839" stroke-width="3.00" stroke-linecap="butt"/><path d="M366.76,666.95 A70.80,70.80 0 0 1 363.43,693.28" fill="none" stroke="#f2495c" stroke-width="3.00" stroke-linecap="butt"/><path d="M241.41,689.17 A57.50,57.50 0 1 1 350.79,689.17" fill="none" stroke="#232429" stroke-width="17.50" stroke-linecap="butt"/><path d="M241.41,689.17 A57.50,57.50 0 0 1 285.33,614.92" fill="none" stroke="#73bf69" stroke-width="17.50" stroke-linecap="butt"/><path d="M147.23,817.66 A57.49,57.49 0 0 1 223.06,746.45" fill="none" stroke="#73bf69" stroke-width="2.44" stroke-linecap="butt"/><path d="M223.06,746.45 A57.49,57.49 0 0 1 259.27,796.29" fill="none" stroke="#eab839" stroke-width="2.44" stroke-linecap="butt"/><path d="M259.27,796.29 A57.49,57.49 0 0 1 256.57,817.66" fill="none" stroke="#f2495c" stroke-width="2.44" stroke-linecap="butt"/><path d="M157.50,814.33 A46.69,46.69 0 1 1 246.30,814.33" fill="none" stroke="#232429" stroke-width="14.21" stroke-linecap="butt"/></svg>
<div class="tr" style="left:-493.8px;width:1200px;text-align:center;top:521.34px;font-size:33.5px;line-height:33.5px;color:#73bf69;-webkit-text-stroke:0.7px #73bf69;letter-spacing:-0.8px;margin-left:-0.4px">0%</div>
<div class="tr" style="left:-304.1px;width:1200px;text-align:center;top:521.34px;font-size:33.5px;line-height:33.5px;color:#73bf69;-webkit-text-stroke:0.7px #73bf69;letter-spacing:-0.8px;margin-left:-0.4px">0%</div>
<div class="tr" style="left:-492.7px;width:1200px;text-align:center;top:662.74px;font-size:33.5px;line-height:33.5px;color:#73bf69;-webkit-text-stroke:0.7px #73bf69;letter-spacing:-0.8px;margin-left:-0.4px">0%</div>
<div class="tr" style="left:-303.9px;width:1200px;text-align:center;top:662.64px;font-size:33.5px;line-height:33.5px;color:#73bf69;-webkit-text-stroke:0.7px #73bf69;letter-spacing:-0.8px;margin-left:-0.4px;letter-spacing:-2.6px;margin-left:-1.3px">45%</div>
<div class="tr" style="left:-398.1px;width:1200px;text-align:center;top:794.33px;font-size:29.5px;line-height:29.5px;color:#73bf69;-webkit-text-stroke:0.7px #73bf69;letter-spacing:-0.8px;margin-left:-0.4px">0%</div>
<div class="tr" style="left:-501.7px;width:1200px;text-align:center;top:556.59px;font-size:18.8px;line-height:18.8px;color:#ccccdc;">FPC: Virtual FPC ...</div>
<div class="tr" style="left:-304.4px;width:1200px;text-align:center;top:556.59px;font-size:18.8px;line-height:18.8px;color:#ccccdc;">MIC: Virtual @ 0/0/*</div>
<div class="tr" style="left:-492.7px;width:1200px;text-align:center;top:698.79px;font-size:18.8px;line-height:18.8px;color:#ccccdc;">PIC: Virtual @ 0/0/*</div>
<div class="tr" style="left:-303.9px;width:1200px;text-align:center;top:698.79px;font-size:18.8px;line-height:18.8px;color:#ccccdc;">Routing Engine 0</div>
<div class="tr" style="left:-398.1px;width:1200px;text-align:center;top:834.76px;font-size:24.5px;line-height:24.5px;color:#ccccdc;">midplane</div>
<div class="tm" style="left:559.0px;width:1200px;text-align:center;top:414.97px;font-size:17.4px;line-height:17.4px;color:#ccccdc;">CPU Utilization</div>
<svg width="1920" height="887"><line x1="450" y1="495.3" x2="1892.4" y2="495.3" stroke="#25262b" stroke-width="1"/><line x1="450" y1="546.1" x2="1892.4" y2="546.1" stroke="#25262b" stroke-width="1"/><line x1="450" y1="596.9" x2="1892.4" y2="596.9" stroke="#25262b" stroke-width="1"/><line x1="450" y1="647.6" x2="1892.4" y2="647.6" stroke="#25262b" stroke-width="1"/><line x1="488.3" y1="461" x2="488.3" y2="703" stroke="#25262b" stroke-width="1"/><line x1="568.1" y1="461" x2="568.1" y2="703" stroke="#25262b" stroke-width="1"/><line x1="647.9" y1="461" x2="647.9" y2="703" stroke="#25262b" stroke-width="1"/><line x1="727.7" y1="461" x2="727.7" y2="703" stroke="#25262b" stroke-width="1"/><line x1="807.5" y1="461" x2="807.5" y2="703" stroke="#25262b" stroke-width="1"/><line x1="887.3" y1="461" x2="887.3" y2="703" stroke="#25262b" stroke-width="1"/><line x1="967.1" y1="461" x2="967.1" y2="703" stroke="#25262b" stroke-width="1"/><line x1="1046.9" y1="461" x2="1046.9" y2="703" stroke="#25262b" stroke-width="1"/><line x1="1126.7" y1="461" x2="1126.7" y2="703" stroke="#25262b" stroke-width="1"/><line x1="1206.5" y1="461" x2="1206.5" y2="703" stroke="#25262b" stroke-width="1"/><line x1="1286.3" y1="461" x2="1286.3" y2="703" stroke="#25262b" stroke-width="1"/><line x1="1366.1" y1="461" x2="1366.1" y2="703" stroke="#25262b" stroke-width="1"/><line x1="1445.9" y1="461" x2="1445.9" y2="703" stroke="#25262b" stroke-width="1"/><line x1="1525.7" y1="461" x2="1525.7" y2="703" stroke="#25262b" stroke-width="1"/><line x1="1605.5" y1="461" x2="1605.5" y2="703" stroke="#25262b" stroke-width="1"/><line x1="1685.3" y1="461" x2="1685.3" y2="703" stroke="#25262b" stroke-width="1"/><line x1="1765.1" y1="461" x2="1765.1" y2="703" stroke="#25262b" stroke-width="1"/><line x1="1844.9" y1="461" x2="1844.9" y2="703" stroke="#25262b" stroke-width="1"/><path d="M454.60,698.3 V610.16 H458.93 V698.3 ZM458.93,698.3 V622.34 H466.92 V698.3 ZM466.92,698.3 V612.33 H474.90 V698.3 ZM474.90,698.3 V615.03 H482.89 V698.3 ZM482.88,698.3 V617.47 H490.87 V698.3 ZM490.87,698.3 V615.03 H498.86 V698.3 ZM498.86,698.3 V612.33 H506.84 V698.3 ZM506.84,698.3 V602.05 H514.83 V698.3 ZM514.83,698.3 V612.33 H522.81 V698.3 ZM522.81,698.3 V610.16 H530.80 V698.3 ZM530.80,698.3 V569.04 H538.78 V698.3 ZM538.78,698.3 V584.46 H546.76 V698.3 ZM546.76,698.3 V599.88 H554.75 V698.3 ZM554.75,698.3 V579.05 H562.74 V698.3 ZM562.74,698.3 V592.58 H570.72 V698.3 ZM570.72,698.3 V566.87 H578.71 V698.3 ZM578.71,698.3 V579.05 H586.69 V698.3 ZM586.69,698.3 V549.29 H594.68 V698.3 ZM594.67,698.3 V561.46 H602.66 V698.3 ZM602.66,698.3 V539.00 H610.65 V698.3 ZM610.64,698.3 V521.15 H618.63 V698.3 ZM618.63,698.3 V541.17 H626.62 V698.3 ZM626.62,698.3 V554.16 H634.60 V698.3 ZM634.60,698.3 V523.58 H642.59 V698.3 ZM642.59,698.3 V506.00 H650.57 V698.3 ZM650.57,698.3 V523.58 H658.56 V698.3 ZM658.56,698.3 V546.04 H666.54 V698.3 ZM666.54,698.3 V577.15 H674.52 V698.3 ZM674.52,698.3 V574.45 H682.51 V698.3 ZM682.51,698.3 V592.58 H690.50 V698.3 ZM690.50,698.3 V584.46 H698.48 V698.3 ZM698.48,698.3 V597.18 H706.47 V698.3 ZM706.47,698.3 V607.46 H714.45 V698.3 ZM714.45,698.3 V587.16 H722.44 V698.3 ZM722.43,698.3 V602.05 H730.42 V698.3 ZM730.42,698.3 V597.18 H738.41 V698.3 ZM738.40,698.3 V607.46 H746.39 V698.3 ZM746.39,698.3 V619.63 H754.38 V698.3 ZM754.38,698.3 V612.33 H762.36 V698.3 ZM762.36,698.3 V617.47 H770.35 V698.3 ZM770.35,698.3 V612.33 H778.33 V698.3 ZM778.33,698.3 V627.75 H786.32 V698.3 ZM786.32,698.3 V612.33 H794.30 V698.3 ZM794.30,698.3 V612.33 H802.28 V698.3 ZM802.29,698.3 V615.03 H810.27 V698.3 ZM810.27,698.3 V604.75 H818.25 V698.3 ZM818.25,698.3 V584.46 H826.24 V698.3 ZM826.24,698.3 V566.87 H834.23 V698.3 ZM834.23,698.3 V571.74 H842.21 V698.3 ZM842.21,698.3 V566.87 H850.20 V698.3 ZM850.20,698.3 V581.75 H858.18 V698.3 ZM858.18,698.3 V599.88 H866.17 V698.3 ZM866.16,698.3 V610.16 H874.15 V698.3 ZM874.15,698.3 V599.88 H882.14 V698.3 ZM882.13,698.3 V619.63 H890.12 V698.3 ZM890.12,698.3 V610.16 H898.11 V698.3 ZM898.11,698.3 V617.47 H906.09 V698.3 ZM906.09,698.3 V610.16 H914.08 V698.3 ZM914.08,698.3 V592.58 H922.06 V698.3 ZM922.06,698.3 V594.74 H930.04 V698.3 ZM930.05,698.3 V582.29 H938.03 V698.3 ZM938.03,698.3 V602.05 H946.01 V698.3 ZM946.02,698.3 V592.58 H954.00 V698.3 ZM954.00,698.3 V597.18 H961.99 V698.3 ZM961.99,698.3 V604.75 H969.97 V698.3 ZM969.97,698.3 V612.33 H977.96 V698.3 ZM977.95,698.3 V589.87 H985.94 V698.3 ZM985.94,698.3 V607.46 H993.93 V698.3 ZM993.92,698.3 V587.16 H1001.91 V698.3 ZM1001.91,698.3 V559.30 H1009.90 V698.3 ZM1009.89,698.3 V528.99 H1017.88 V698.3 ZM1017.88,698.3 V556.59 H1025.87 V698.3 ZM1025.87,698.3 V571.74 H1033.85 V698.3 ZM1033.85,698.3 V574.45 H1041.84 V698.3 ZM1041.84,698.3 V582.29 H1049.82 V698.3 ZM1049.82,698.3 V594.74 H1057.80 V698.3 ZM1057.81,698.3 V602.05 H1065.79 V698.3 ZM1065.79,698.3 V617.74 H1073.77 V698.3 ZM1073.78,698.3 V629.91 H1081.76 V698.3 ZM1081.76,698.3 V635.05 H1089.74 V698.3 ZM1089.75,698.3 V615.03 H1097.73 V698.3 ZM1097.73,698.3 V615.03 H1105.71 V698.3 ZM1105.72,698.3 V627.75 H1113.70 V698.3 ZM1113.70,698.3 V635.05 H1121.68 V698.3 ZM1121.68,698.3 V584.46 H1129.67 V698.3 ZM1129.67,698.3 V571.74 H1137.65 V698.3 ZM1137.65,698.3 V577.15 H1145.64 V698.3 ZM1145.64,698.3 V597.18 H1153.62 V698.3 ZM1153.62,698.3 V579.05 H1161.61 V698.3 ZM1161.61,698.3 V569.04 H1169.60 V698.3 ZM1169.60,698.3 V589.87 H1177.58 V698.3 ZM1177.58,698.3 V587.16 H1185.56 V698.3 ZM1185.57,698.3 V569.04 H1193.55 V698.3 ZM1193.55,698.3 V589.87 H1201.53 V698.3 ZM1201.54,698.3 V607.46 H1209.52 V698.3 ZM1209.52,698.3 V597.18 H1217.50 V698.3 ZM1217.51,698.3 V602.05 H1225.49 V698.3 ZM1225.49,698.3 V554.16 H1233.47 V698.3 ZM1233.48,698.3 V487.87 H1241.46 V698.3 ZM1241.46,698.3 V528.99 H1249.44 V698.3 ZM1249.44,698.3 V549.29 H1257.43 V698.3 ZM1257.43,698.3 V541.17 H1265.41 V698.3 ZM1265.41,698.3 V539.00 H1273.40 V698.3 ZM1273.40,698.3 V526.29 H1281.38 V698.3 ZM1281.38,698.3 V536.57 H1289.37 V698.3 ZM1289.37,698.3 V546.58 H1297.36 V698.3 ZM1297.36,698.3 V523.58 H1305.34 V698.3 ZM1305.34,698.3 V483.00 H1313.33 V698.3 ZM1313.33,698.3 V513.30 H1321.31 V698.3 ZM1321.31,698.3 V495.71 H1329.29 V698.3 ZM1329.30,698.3 V516.28 H1337.28 V698.3 ZM1337.28,698.3 V533.86 H1345.26 V698.3 ZM1345.27,698.3 V536.57 H1353.25 V698.3 ZM1353.25,698.3 V541.17 H1361.23 V698.3 ZM1361.24,698.3 V559.30 H1369.22 V698.3 ZM1369.22,698.3 V574.45 H1377.20 V698.3 ZM1377.21,698.3 V569.04 H1385.19 V698.3 ZM1385.19,698.3 V574.45 H1393.17 V698.3 ZM1393.17,698.3 V589.87 H1401.16 V698.3 ZM1401.16,698.3 V577.15 H1409.14 V698.3 ZM1409.14,698.3 V579.05 H1417.13 V698.3 ZM1417.13,698.3 V592.58 H1425.12 V698.3 ZM1425.12,698.3 V599.88 H1433.10 V698.3 ZM1433.10,698.3 V610.16 H1441.09 V698.3 ZM1441.09,698.3 V582.29 H1449.07 V698.3 ZM1449.07,698.3 V589.87 H1457.05 V698.3 ZM1457.06,698.3 V610.16 H1465.04 V698.3 ZM1465.04,698.3 V615.03 H1473.02 V698.3 ZM1473.03,698.3 V597.18 H1481.01 V698.3 ZM1481.01,698.3 V602.05 H1488.99 V698.3 ZM1489.00,698.3 V610.16 H1496.98 V698.3 ZM1496.98,698.3 V569.04 H1504.96 V698.3 ZM1504.97,698.3 V582.29 H1512.95 V698.3 ZM1512.95,698.3 V584.46 H1520.93 V698.3 ZM1520.94,698.3 V562.00 H1528.92 V698.3 ZM1528.92,698.3 V564.17 H1536.90 V698.3 ZM1536.91,698.3 V584.46 H1544.89 V698.3 ZM1544.89,698.3 V582.29 H1552.88 V698.3 ZM1552.88,698.3 V574.45 H1560.86 V698.3 ZM1560.86,698.3 V594.74 H1568.85 V698.3 ZM1568.85,698.3 V562.00 H1576.83 V698.3 ZM1576.83,698.3 V569.04 H1584.82 V698.3 ZM1584.82,698.3 V579.05 H1592.80 V698.3 ZM1592.80,698.3 V589.87 H1600.79 V698.3 ZM1600.79,698.3 V579.05 H1608.77 V698.3 ZM1608.77,698.3 V571.74 H1616.76 V698.3 ZM1616.76,698.3 V577.15 H1624.74 V698.3 ZM1624.74,698.3 V513.57 H1632.72 V698.3 ZM1632.73,698.3 V508.70 H1640.71 V698.3 ZM1640.71,698.3 V508.70 H1648.69 V698.3 ZM1648.70,698.3 V518.17 H1656.68 V698.3 ZM1656.68,698.3 V541.17 H1664.66 V698.3 ZM1664.67,698.3 V549.29 H1672.65 V698.3 ZM1672.65,698.3 V569.58 H1680.63 V698.3 ZM1680.64,698.3 V582.29 H1688.62 V698.3 ZM1688.62,698.3 V589.87 H1696.61 V698.3 ZM1696.61,698.3 V597.18 H1704.59 V698.3 ZM1704.59,698.3 V604.75 H1712.58 V698.3 ZM1712.58,698.3 V589.87 H1720.56 V698.3 ZM1720.56,698.3 V602.05 H1728.55 V698.3 ZM1728.55,698.3 V594.74 H1736.53 V698.3 ZM1736.53,698.3 V566.87 H1744.52 V698.3 ZM1744.52,698.3 V569.58 H1752.50 V698.3 ZM1752.50,698.3 V574.45 H1760.49 V698.3 ZM1760.49,698.3 V579.05 H1768.47 V698.3 ZM1768.47,698.3 V594.74 H1776.45 V698.3 ZM1776.46,698.3 V597.18 H1784.44 V698.3 ZM1784.44,698.3 V602.05 H1792.42 V698.3 ZM1792.43,698.3 V617.47 H1800.41 V698.3 ZM1800.41,698.3 V577.15 H1808.39 V698.3 ZM1808.40,698.3 V559.30 H1816.38 V698.3 ZM1816.38,698.3 V571.74 H1824.37 V698.3 ZM1824.37,698.3 V541.17 H1832.35 V698.3 ZM1832.35,698.3 V566.87 H1840.34 V698.3 ZM1840.34,698.3 V564.17 H1848.32 V698.3 ZM1848.32,698.3 V562.00 H1856.31 V698.3 ZM1856.31,698.3 V566.76 H1864.29 V698.3 ZM1864.29,698.3 V582.16 H1872.28 V698.3 ZM1872.28,698.3 V571.62 H1880.26 V698.3 ZM1880.26,698.3 V592.43 H1888.25 V698.3 ZM1888.25,698.3 V584.32 H1892.40 V698.3 Z" fill="#5a3519"/><defs><pattern id="st" x="458.93" y="0" width="5.988" height="10" patternUnits="userSpaceOnUse"><rect x="0.8" y="0" width="1.4" height="10" fill="#d26d25"/><rect x="2.65" y="0" width="1.45" height="10" fill="#d26d25"/><rect x="4.55" y="0" width="1.4" height="10" fill="#d26d25"/></pattern><clipPath id="bc"><path d="M454.60,698.3 V610.16 H458.93 V698.3 ZM458.93,698.3 V622.34 H466.92 V698.3 ZM466.92,698.3 V612.33 H474.90 V698.3 ZM474.90,698.3 V615.03 H482.89 V698.3 ZM482.88,698.3 V617.47 H490.87 V698.3 ZM490.87,698.3 V615.03 H498.86 V698.3 ZM498.86,698.3 V612.33 H506.84 V698.3 ZM506.84,698.3 V602.05 H514.83 V698.3 ZM514.83,698.3 V612.33 H522.81 V698.3 ZM522.81,698.3 V610.16 H530.80 V698.3 ZM530.80,698.3 V569.04 H538.78 V698.3 ZM538.78,698.3 V584.46 H546.76 V698.3 ZM546.76,698.3 V599.88 H554.75 V698.3 ZM554.75,698.3 V579.05 H562.74 V698.3 ZM562.74,698.3 V592.58 H570.72 V698.3 ZM570.72,698.3 V566.87 H578.71 V698.3 ZM578.71,698.3 V579.05 H586.69 V698.3 ZM586.69,698.3 V549.29 H594.68 V698.3 ZM594.67,698.3 V561.46 H602.66 V698.3 ZM602.66,698.3 V539.00 H610.65 V698.3 ZM610.64,698.3 V521.15 H618.63 V698.3 ZM618.63,698.3 V541.17 H626.62 V698.3 ZM626.62,698.3 V554.16 H634.60 V698.3 ZM634.60,698.3 V523.58 H642.59 V698.3 ZM642.59,698.3 V506.00 H650.57 V698.3 ZM650.57,698.3 V523.58 H658.56 V698.3 ZM658.56,698.3 V546.04 H666.54 V698.3 ZM666.54,698.3 V577.15 H674.52 V698.3 ZM674.52,698.3 V574.45 H682.51 V698.3 ZM682.51,698.3 V592.58 H690.50 V698.3 ZM690.50,698.3 V584.46 H698.48 V698.3 ZM698.48,698.3 V597.18 H706.47 V698.3 ZM706.47,698.3 V607.46 H714.45 V698.3 ZM714.45,698.3 V587.16 H722.44 V698.3 ZM722.43,698.3 V602.05 H730.42 V698.3 ZM730.42,698.3 V597.18 H738.41 V698.3 ZM738.40,698.3 V607.46 H746.39 V698.3 ZM746.39,698.3 V619.63 H754.38 V698.3 ZM754.38,698.3 V612.33 H762.36 V698.3 ZM762.36,698.3 V617.47 H770.35 V698.3 ZM770.35,698.3 V612.33 H778.33 V698.3 ZM778.33,698.3 V627.75 H786.32 V698.3 ZM786.32,698.3 V612.33 H794.30 V698.3 ZM794.30,698.3 V612.33 H802.28 V698.3 ZM802.29,698.3 V615.03 H810.27 V698.3 ZM810.27,698.3 V604.75 H818.25 V698.3 ZM818.25,698.3 V584.46 H826.24 V698.3 ZM826.24,698.3 V566.87 H834.23 V698.3 ZM834.23,698.3 V571.74 H842.21 V698.3 ZM842.21,698.3 V566.87 H850.20 V698.3 ZM850.20,698.3 V581.75 H858.18 V698.3 ZM858.18,698.3 V599.88 H866.17 V698.3 ZM866.16,698.3 V610.16 H874.15 V698.3 ZM874.15,698.3 V599.88 H882.14 V698.3 ZM882.13,698.3 V619.63 H890.12 V698.3 ZM890.12,698.3 V610.16 H898.11 V698.3 ZM898.11,698.3 V617.47 H906.09 V698.3 ZM906.09,698.3 V610.16 H914.08 V698.3 ZM914.08,698.3 V592.58 H922.06 V698.3 ZM922.06,698.3 V594.74 H930.04 V698.3 ZM930.05,698.3 V582.29 H938.03 V698.3 ZM938.03,698.3 V602.05 H946.01 V698.3 ZM946.02,698.3 V592.58 H954.00 V698.3 ZM954.00,698.3 V597.18 H961.99 V698.3 ZM961.99,698.3 V604.75 H969.97 V698.3 ZM969.97,698.3 V612.33 H977.96 V698.3 ZM977.95,698.3 V589.87 H985.94 V698.3 ZM985.94,698.3 V607.46 H993.93 V698.3 ZM993.92,698.3 V587.16 H1001.91 V698.3 ZM1001.91,698.3 V559.30 H1009.90 V698.3 ZM1009.89,698.3 V528.99 H1017.88 V698.3 ZM1017.88,698.3 V556.59 H1025.87 V698.3 ZM1025.87,698.3 V571.74 H1033.85 V698.3 ZM1033.85,698.3 V574.45 H1041.84 V698.3 ZM1041.84,698.3 V582.29 H1049.82 V698.3 ZM1049.82,698.3 V594.74 H1057.80 V698.3 ZM1057.81,698.3 V602.05 H1065.79 V698.3 ZM1065.79,698.3 V617.74 H1073.77 V698.3 ZM1073.78,698.3 V629.91 H1081.76 V698.3 ZM1081.76,698.3 V635.05 H1089.74 V698.3 ZM1089.75,698.3 V615.03 H1097.73 V698.3 ZM1097.73,698.3 V615.03 H1105.71 V698.3 ZM1105.72,698.3 V627.75 H1113.70 V698.3 ZM1113.70,698.3 V635.05 H1121.68 V698.3 ZM1121.68,698.3 V584.46 H1129.67 V698.3 ZM1129.67,698.3 V571.74 H1137.65 V698.3 ZM1137.65,698.3 V577.15 H1145.64 V698.3 ZM1145.64,698.3 V597.18 H1153.62 V698.3 ZM1153.62,698.3 V579.05 H1161.61 V698.3 ZM1161.61,698.3 V569.04 H1169.60 V698.3 ZM1169.60,698.3 V589.87 H1177.58 V698.3 ZM1177.58,698.3 V587.16 H1185.56 V698.3 ZM1185.57,698.3 V569.04 H1193.55 V698.3 ZM1193.55,698.3 V589.87 H1201.53 V698.3 ZM1201.54,698.3 V607.46 H1209.52 V698.3 ZM1209.52,698.3 V597.18 H1217.50 V698.3 ZM1217.51,698.3 V602.05 H1225.49 V698.3 ZM1225.49,698.3 V554.16 H1233.47 V698.3 ZM1233.48,698.3 V487.87 H1241.46 V698.3 ZM1241.46,698.3 V528.99 H1249.44 V698.3 ZM1249.44,698.3 V549.29 H1257.43 V698.3 ZM1257.43,698.3 V541.17 H1265.41 V698.3 ZM1265.41,698.3 V539.00 H1273.40 V698.3 ZM1273.40,698.3 V526.29 H1281.38 V698.3 ZM1281.38,698.3 V536.57 H1289.37 V698.3 ZM1289.37,698.3 V546.58 H1297.36 V698.3 ZM1297.36,698.3 V523.58 H1305.34 V698.3 ZM1305.34,698.3 V483.00 H1313.33 V698.3 ZM1313.33,698.3 V513.30 H1321.31 V698.3 ZM1321.31,698.3 V495.71 H1329.29 V698.3 ZM1329.30,698.3 V516.28 H1337.28 V698.3 ZM1337.28,698.3 V533.86 H1345.26 V698.3 ZM1345.27,698.3 V536.57 H1353.25 V698.3 ZM1353.25,698.3 V541.17 H1361.23 V698.3 ZM1361.24,698.3 V559.30 H1369.22 V698.3 ZM1369.22,698.3 V574.45 H1377.20 V698.3 ZM1377.21,698.3 V569.04 H1385.19 V698.3 ZM1385.19,698.3 V574.45 H1393.17 V698.3 ZM1393.17,698.3 V589.87 H1401.16 V698.3 ZM1401.16,698.3 V577.15 H1409.14 V698.3 ZM1409.14,698.3 V579.05 H1417.13 V698.3 ZM1417.13,698.3 V592.58 H1425.12 V698.3 ZM1425.12,698.3 V599.88 H1433.10 V698.3 ZM1433.10,698.3 V610.16 H1441.09 V698.3 ZM1441.09,698.3 V582.29 H1449.07 V698.3 ZM1449.07,698.3 V589.87 H1457.05 V698.3 ZM1457.06,698.3 V610.16 H1465.04 V698.3 ZM1465.04,698.3 V615.03 H1473.02 V698.3 ZM1473.03,698.3 V597.18 H1481.01 V698.3 ZM1481.01,698.3 V602.05 H1488.99 V698.3 ZM1489.00,698.3 V610.16 H1496.98 V698.3 ZM1496.98,698.3 V569.04 H1504.96 V698.3 ZM1504.97,698.3 V582.29 H1512.95 V698.3 ZM1512.95,698.3 V584.46 H1520.93 V698.3 ZM1520.94,698.3 V562.00 H1528.92 V698.3 ZM1528.92,698.3 V564.17 H1536.90 V698.3 ZM1536.91,698.3 V584.46 H1544.89 V698.3 ZM1544.89,698.3 V582.29 H1552.88 V698.3 ZM1552.88,698.3 V574.45 H1560.86 V698.3 ZM1560.86,698.3 V594.74 H1568.85 V698.3 ZM1568.85,698.3 V562.00 H1576.83 V698.3 ZM1576.83,698.3 V569.04 H1584.82 V698.3 ZM1584.82,698.3 V579.05 H1592.80 V698.3 ZM1592.80,698.3 V589.87 H1600.79 V698.3 ZM1600.79,698.3 V579.05 H1608.77 V698.3 ZM1608.77,698.3 V571.74 H1616.76 V698.3 ZM1616.76,698.3 V577.15 H1624.74 V698.3 ZM1624.74,698.3 V513.57 H1632.72 V698.3 ZM1632.73,698.3 V508.70 H1640.71 V698.3 ZM1640.71,698.3 V508.70 H1648.69 V698.3 ZM1648.70,698.3 V518.17 H1656.68 V698.3 ZM1656.68,698.3 V541.17 H1664.66 V698.3 ZM1664.67,698.3 V549.29 H1672.65 V698.3 ZM1672.65,698.3 V569.58 H1680.63 V698.3 ZM1680.64,698.3 V582.29 H1688.62 V698.3 ZM1688.62,698.3 V589.87 H1696.61 V698.3 ZM1696.61,698.3 V597.18 H1704.59 V698.3 ZM1704.59,698.3 V604.75 H1712.58 V698.3 ZM1712.58,698.3 V589.87 H1720.56 V698.3 ZM1720.56,698.3 V602.05 H1728.55 V698.3 ZM1728.55,698.3 V594.74 H1736.53 V698.3 ZM1736.53,698.3 V566.87 H1744.52 V698.3 ZM1744.52,698.3 V569.58 H1752.50 V698.3 ZM1752.50,698.3 V574.45 H1760.49 V698.3 ZM1760.49,698.3 V579.05 H1768.47 V698.3 ZM1768.47,698.3 V594.74 H1776.45 V698.3 ZM1776.46,698.3 V597.18 H1784.44 V698.3 ZM1784.44,698.3 V602.05 H1792.42 V698.3 ZM1792.43,698.3 V617.47 H1800.41 V698.3 ZM1800.41,698.3 V577.15 H1808.39 V698.3 ZM1808.40,698.3 V559.30 H1816.38 V698.3 ZM1816.38,698.3 V571.74 H1824.37 V698.3 ZM1824.37,698.3 V541.17 H1832.35 V698.3 ZM1832.35,698.3 V566.87 H1840.34 V698.3 ZM1840.34,698.3 V564.17 H1848.32 V698.3 ZM1848.32,698.3 V562.00 H1856.31 V698.3 ZM1856.31,698.3 V566.76 H1864.29 V698.3 ZM1864.29,698.3 V582.16 H1872.28 V698.3 ZM1872.28,698.3 V571.62 H1880.26 V698.3 ZM1880.26,698.3 V592.43 H1888.25 V698.3 ZM1888.25,698.3 V584.32 H1892.40 V698.3 Z"/></clipPath></defs><rect x="454" y="460" width="1440" height="240" fill="url(#st)" clip-path="url(#bc)"/><path d="M454.9,588.5 C456.8,588.5 461.9,588.7 466.2,588.5 C470.6,588.3 477.5,587.0 481.1,587.2 C484.7,587.3 484.0,588.6 487.9,589.3 C491.7,590.1 497.3,591.2 504.1,591.8 C510.9,592.3 522.2,592.8 528.5,592.6 C534.8,592.4 537.0,591.1 542.0,590.7 C547.0,590.2 553.7,589.9 558.2,589.9 C562.7,589.9 564.1,590.1 569.0,590.7 C574.0,591.3 582.6,593.1 588.0,593.7 C593.4,594.2 597.5,594.4 601.5,594.2 C605.6,594.0 606.0,593.7 612.3,592.6 C618.7,591.4 632.6,588.9 639.4,587.2 C646.2,585.5 648.4,583.6 652.9,582.3 C657.4,580.9 660.8,579.8 666.5,579.0 C672.1,578.3 679.1,578.4 687.0,577.7 C694.9,577.0 705.0,575.8 714.1,575.0 C723.1,574.2 732.1,573.2 741.1,573.1 C750.1,573.0 760.1,573.5 768.2,574.2 C776.3,574.9 780.8,576.0 789.8,577.2 C798.8,578.3 812.4,580.1 822.3,580.9 C832.2,581.8 839.4,580.6 849.3,582.3 C859.3,584.0 872.8,588.4 881.8,591.2 C890.8,594.1 896.8,597.6 903.5,599.3 C910.1,601.1 909.9,601.1 922.0,601.5 C934.1,601.9 962.6,601.9 976.1,601.5 C989.6,601.1 994.2,600.8 1003.2,599.3 C1012.2,597.9 1021.2,594.3 1030.2,592.6 C1039.2,590.9 1048.3,588.6 1057.3,589.1 C1066.3,589.5 1073.6,593.6 1084.3,595.3 C1095.1,597.0 1112.7,599.2 1121.7,599.3 C1130.7,599.4 1133.1,596.7 1138.5,595.8 C1143.8,594.9 1144.6,594.6 1154.0,593.9 C1163.4,593.3 1182.9,592.4 1194.6,592.0 C1206.3,591.7 1216.2,593.1 1224.3,592.0 C1232.5,591.0 1237.0,586.8 1243.3,585.8 C1249.6,584.9 1253.2,587.3 1262.2,586.4 C1271.2,585.5 1288.4,583.0 1297.4,580.4 C1306.4,577.8 1310.5,573.9 1316.3,570.9 C1322.2,568.0 1325.4,565.8 1332.6,562.8 C1339.8,559.8 1353.3,554.7 1359.6,552.8 C1365.9,550.9 1366.1,551.7 1370.5,551.5 C1374.8,551.2 1378.9,551.5 1386.0,551.5 C1393.1,551.4 1404.0,551.0 1413.1,551.2 C1422.1,551.4 1431.5,552.7 1440.1,552.8 C1448.7,552.9 1456.8,550.9 1464.5,552.0 C1472.1,553.1 1476.6,557.2 1486.1,559.6 C1495.6,562.0 1512.7,564.9 1521.3,566.3 C1529.8,567.8 1530.3,566.2 1537.5,568.2 C1544.7,570.3 1553.7,575.8 1564.6,578.5 C1575.4,581.2 1592.4,583.4 1602.5,584.5 C1612.5,585.5 1616.7,586.4 1625.0,585.0 C1633.3,583.6 1643.0,578.1 1652.1,575.8 C1661.1,573.5 1670.1,571.7 1679.1,570.9 C1688.1,570.1 1696.2,571.2 1706.2,570.9 C1716.1,570.7 1729.6,569.9 1738.6,569.6 C1747.7,569.3 1749.9,568.5 1760.3,569.0 C1770.7,569.6 1790.9,572.6 1800.9,573.1 C1810.8,573.6 1813.0,572.7 1819.8,572.3 C1826.6,571.8 1840.7,570.4 1841.5,570.4 C1842.2,570.4 1820.9,572.3 1824.3,572.2 C1827.8,572.0 1850.9,568.6 1862.2,569.5 C1873.4,570.3 1886.9,575.8 1891.9,577.0" fill="none" stroke="#5794f2" stroke-width="2.3" stroke-linejoin="round" stroke-linecap="round"/></svg>
<div class="tr" style="left:-756.4px;width:1200px;text-align:right;top:488.35px;font-size:14px;line-height:14px;color:#ccccdc;">80%</div>
<div class="tr" style="left:-756.4px;width:1200px;text-align:right;top:539.15px;font-size:14px;line-height:14px;color:#ccccdc;">60%</div>
<div class="tr" style="left:-756.4px;width:1200px;text-align:right;top:589.95px;font-size:14px;line-height:14px;color:#ccccdc;">40%</div>
<div class="tr" style="left:-756.4px;width:1200px;text-align:right;top:640.65px;font-size:14px;line-height:14px;color:#ccccdc;">20%</div>
<div class="tr" style="left:-756.4px;width:1200px;text-align:right;top:691.25px;font-size:14px;line-height:14px;color:#ccccdc;">0%</div>
<div class="tr" style="left:-111.7px;width:1200px;text-align:center;top:709.20px;font-size:14.3px;line-height:14.3px;color:#ccccdc;">11:00</div>
<div class="tr" style="left:-31.9px;width:1200px;text-align:center;top:709.20px;font-size:14.3px;line-height:14.3px;color:#ccccdc;">11:10</div>
<div class="tr" style="left:47.9px;width:1200px;text-align:center;top:709.20px;font-size:14.3px;line-height:14.3px;color:#ccccdc;">11:20</div>
<div class="tr" style="left:127.7px;width:1200px;text-align:center;top:709.20px;font-size:14.3px;line-height:14.3px;color:#ccccdc;">11:30</div>
<div class="tr" style="left:207.5px;width:1200px;text-align:center;top:709.20px;font-size:14.3px;line-height:14.3px;color:#ccccdc;">11:40</div>
<div class="tr" style="left:287.3px;width:1200px;text-align:center;top:709.20px;font-size:14.3px;line-height:14.3px;color:#ccccdc;">11:50</div>
<div class="tr" style="left:367.1px;width:1200px;text-align:center;top:709.20px;font-size:14.3px;line-height:14.3px;color:#ccccdc;">12:00</div>
<div class="tr" style="left:446.9px;width:1200px;text-align:center;top:709.20px;font-size:14.3px;line-height:14.3px;color:#ccccdc;">12:10</div>
<div class="tr" style="left:526.7px;width:1200px;text-align:center;top:709.20px;font-size:14.3px;line-height:14.3px;color:#ccccdc;">12:20</div>
<div class="tr" style="left:606.5px;width:1200px;text-align:center;top:709.20px;font-size:14.3px;line-height:14.3px;color:#ccccdc;">12:30</div>
<div class="tr" style="left:686.3px;width:1200px;text-align:center;top:709.20px;font-size:14.3px;line-height:14.3px;color:#ccccdc;">12:40</div>
<div class="tr" style="left:766.1px;width:1200px;text-align:center;top:709.20px;font-size:14.3px;line-height:14.3px;color:#ccccdc;">12:50</div>
<div class="tr" style="left:845.9px;width:1200px;text-align:center;top:709.20px;font-size:14.3px;line-height:14.3px;color:#ccccdc;">13:00</div>
<div class="tr" style="left:925.7px;width:1200px;text-align:center;top:709.20px;font-size:14.3px;line-height:14.3px;color:#ccccdc;">13:10</div>
<div class="tr" style="left:1005.5px;width:1200px;text-align:center;top:709.20px;font-size:14.3px;line-height:14.3px;color:#ccccdc;">13:20</div>
<div class="tr" style="left:1085.3px;width:1200px;text-align:center;top:709.20px;font-size:14.3px;line-height:14.3px;color:#ccccdc;">13:30</div>
<div class="tr" style="left:1165.1px;width:1200px;text-align:center;top:709.20px;font-size:14.3px;line-height:14.3px;color:#ccccdc;">13:40</div>
<div class="tr" style="left:1244.9px;width:1200px;text-align:center;top:709.20px;font-size:14.3px;line-height:14.3px;color:#ccccdc;">13:50</div>
<div class="tm" style="left:572.2px;width:1200px;text-align:right;top:728.48px;font-size:15.5px;line-height:15.5px;color:#6e9fff;">Last *</div>
<div class="tm" style="left:631.9px;width:1200px;text-align:right;top:728.48px;font-size:15.5px;line-height:15.5px;color:#6e9fff;">Max</div>
<div class="tm" style="left:692.0px;width:1200px;text-align:right;top:728.48px;font-size:15.5px;line-height:15.5px;color:#6e9fff;">Mean</div>
<div style="position:absolute;left:406px;top:749px;width:1506px;height:121.2px;overflow:hidden">
<div class="ln" style="left:10px;top:0.5px;width:1486px;height:1px"></div>
<div style="position:absolute;left:18.7px;top:13.0px;width:17px;height:4.5px;border-radius:2px;background:#73bf69"></div>
<div class="tr" style="left:44.8px;top:7.89px;font-size:14.9px;line-height:14.9px;color:#ccccdc;">FPC: Virtual FPC @ 0/*/*</div>
<div class="tr" style="left:166.2px;width:1200px;text-align:right;top:8.14px;font-size:14.6px;line-height:14.6px;color:#ccccdc;">0%</div>
<div class="tr" style="left:225.9px;width:1200px;text-align:right;top:8.14px;font-size:14.6px;line-height:14.6px;color:#ccccdc;">0%</div>
<div class="tr" style="left:286.0px;width:1200px;text-align:right;top:8.14px;font-size:14.6px;line-height:14.6px;color:#ccccdc;">0%</div>
<div class="ln" style="left:10px;top:28.2px;width:1486px;height:1px"></div>
<div style="position:absolute;left:18.7px;top:40.5px;width:17px;height:4.5px;border-radius:2px;background:#eccf3a"></div>
<div class="tr" style="left:44.8px;top:35.34px;font-size:14.9px;line-height:14.9px;color:#ccccdc;">MIC: Virtual @ 0/0/*</div>
<div class="tr" style="left:166.2px;width:1200px;text-align:right;top:35.59px;font-size:14.6px;line-height:14.6px;color:#ccccdc;">0%</div>
<div class="tr" style="left:225.9px;width:1200px;text-align:right;top:35.59px;font-size:14.6px;line-height:14.6px;color:#ccccdc;">0%</div>
<div class="tr" style="left:286.0px;width:1200px;text-align:right;top:35.59px;font-size:14.6px;line-height:14.6px;color:#ccccdc;">0%</div>
<div class="ln" style="left:10px;top:56.0px;width:1486px;height:1px"></div>
<div style="position:absolute;left:18.7px;top:67.9px;width:17px;height:4.5px;border-radius:2px;background:#8ab8ff"></div>
<div class="tr" style="left:44.8px;top:62.79px;font-size:14.9px;line-height:14.9px;color:#ccccdc;">PIC: Virtual @ 0/0/*</div>
<div class="tr" style="left:166.2px;width:1200px;text-align:right;top:63.04px;font-size:14.6px;line-height:14.6px;color:#ccccdc;">0%</div>
<div class="tr" style="left:225.9px;width:1200px;text-align:right;top:63.04px;font-size:14.6px;line-height:14.6px;color:#ccccdc;">0%</div>
<div class="tr" style="left:286.0px;width:1200px;text-align:right;top:63.04px;font-size:14.6px;line-height:14.6px;color:#ccccdc;">0%</div>
<div class="ln" style="left:10px;top:83.8px;width:1486px;height:1px"></div>
<div style="position:absolute;left:18.7px;top:95.4px;width:17px;height:4.5px;border-radius:2px;background:#f17f2c"></div>
<div class="tr" style="left:44.8px;top:90.24px;font-size:14.9px;line-height:14.9px;color:#ccccdc;">Routing Engine 0</div>
<div class="tr" style="left:166.2px;width:1200px;text-align:right;top:90.49px;font-size:14.6px;line-height:14.6px;color:#ccccdc;">45%</div>
<div class="tr" style="left:225.9px;width:1200px;text-align:right;top:90.49px;font-size:14.6px;line-height:14.6px;color:#ccccdc;">85%</div>
<div class="tr" style="left:286.0px;width:1200px;text-align:right;top:90.49px;font-size:14.6px;line-height:14.6px;color:#ccccdc;">47.0%</div>
<div class="ln" style="left:10px;top:111.5px;width:1486px;height:1px"></div>
<div style="position:absolute;left:18.7px;top:122.8px;width:17px;height:4.5px;border-radius:2px;background:#f2495c"></div>
<div class="tr" style="left:44.8px;top:117.69px;font-size:14.9px;line-height:14.9px;color:#ccccdc;">midplane</div>
<div class="tr" style="left:166.2px;width:1200px;text-align:right;top:117.94px;font-size:14.6px;line-height:14.6px;color:#ccccdc;">0%</div>
<div class="tr" style="left:225.9px;width:1200px;text-align:right;top:117.94px;font-size:14.6px;line-height:14.6px;color:#ccccdc;">0%</div>
<div class="tr" style="left:286.0px;width:1200px;text-align:right;top:117.94px;font-size:14.6px;line-height:14.6px;color:#ccccdc;">0%</div>
</div>
<div style="position:absolute;left:1893px;top:725.7px;width:9px;height:108px;border-radius:4.5px;background:#333439"></div>
</body></html>
